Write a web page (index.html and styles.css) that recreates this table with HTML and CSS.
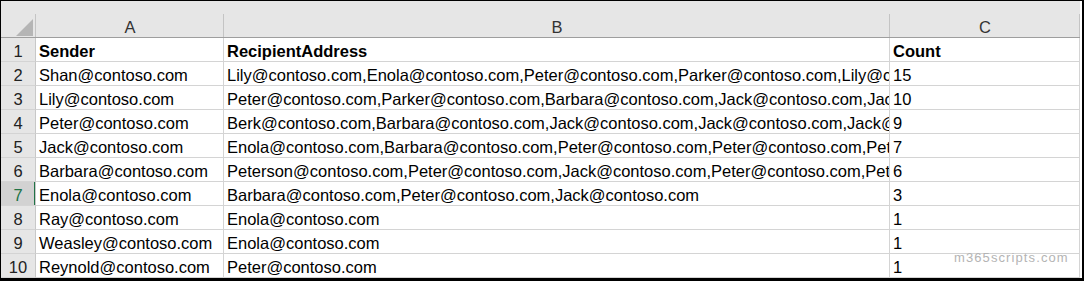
FILE: index.html
```html
<!DOCTYPE html>
<html lang="en">
<head>
<meta charset="utf-8">
<title>Sheet</title>
<link rel="stylesheet" href="styles.css">
</head>
<body>
<div class="sheet">
  <div class="grid">
    <div class="corner"><span class="tri"></span></div>
    <div class="colhead">A</div>
    <div class="colhead">B</div>
    <div class="colhead">C</div>

    <div class="rowhead">1</div>
    <div class="cell bold">Sender</div>
    <div class="cell bold">RecipientAddress</div>
    <div class="cell bold">Count</div>

    <div class="rowhead">2</div>
    <div class="cell">Shan@contoso.com</div>
    <div class="cell">Lily@contoso.com,Enola@contoso.com,Peter@contoso.com,Parker@contoso.com,Lily@contoso.com,Jack@contoso.com</div>
    <div class="cell">15</div>

    <div class="rowhead">3</div>
    <div class="cell">Lily@contoso.com</div>
    <div class="cell">Peter@contoso.com,Parker@contoso.com,Barbara@contoso.com,Jack@contoso.com,Jack@contoso.com</div>
    <div class="cell">10</div>

    <div class="rowhead">4</div>
    <div class="cell">Peter@contoso.com</div>
    <div class="cell">Berk@contoso.com,Barbara@contoso.com,Jack@contoso.com,Jack@contoso.com,Jack@contoso.com</div>
    <div class="cell">9</div>

    <div class="rowhead">5</div>
    <div class="cell">Jack@contoso.com</div>
    <div class="cell">Enola@contoso.com,Barbara@contoso.com,Peter@contoso.com,Peter@contoso.com,Peter@contoso.com</div>
    <div class="cell">7</div>

    <div class="rowhead">6</div>
    <div class="cell">Barbara@contoso.com</div>
    <div class="cell">Peterson@contoso.com,Peter@contoso.com,Jack@contoso.com,Peter@contoso.com,Peter@contoso.com</div>
    <div class="cell">6</div>

    <div class="rowhead selected">7</div>
    <div class="cell">Enola@contoso.com</div>
    <div class="cell">Barbara@contoso.com,Peter@contoso.com,Jack@contoso.com</div>
    <div class="cell">3</div>

    <div class="rowhead">8</div>
    <div class="cell">Ray@contoso.com</div>
    <div class="cell">Enola@contoso.com</div>
    <div class="cell">1</div>

    <div class="rowhead">9</div>
    <div class="cell">Weasley@contoso.com</div>
    <div class="cell">Enola@contoso.com</div>
    <div class="cell">1</div>

    <div class="rowhead">10</div>
    <div class="cell">Reynold@contoso.com</div>
    <div class="cell">Peter@contoso.com</div>
    <div class="cell">1</div>
  </div>
  <div class="watermark">m365scripts.com</div>
</div>
</body>
</html>
```

FILE: styles.css
```css
html, body {
  margin: 0;
  padding: 0;
  background: #ffffff;
}

.sheet {
  position: relative;
  width: 1084px;
  height: 281px;
  box-sizing: border-box;
  border-top: 1px solid #000;
  border-left: 1px solid #000;
  border-right: 2px solid #000;
  border-bottom: 3px solid #000;
  padding-right: 2px;
  background: #fff;
  font-family: "Liberation Sans", Arial, sans-serif;
  font-size: 16.5px;
  color: #000;
}

.grid {
  display: grid;
  grid-template-columns: 35px 188px 666px 190px;
  grid-template-rows: 37px repeat(10, 24px);
}

.grid > div {
  box-sizing: border-box;
  display: flex;
  align-items: flex-end;
  line-height: 1;
  padding-bottom: 2px;
  white-space: nowrap;
  overflow: hidden;
  min-width: 0;
}

.corner,
.colhead {
  position: relative;
  background: #e6e6e6;
  border-bottom: 1px solid #9e9e9e;
  color: #333;
}

.corner::after,
.colhead::after {
  content: "";
  position: absolute;
  right: 0;
  top: 13px;
  bottom: 0;
  width: 1px;
  background: #c4c4c4;
}

.colhead {
  justify-content: center;
  padding-bottom: 2px;
}

.tri {
  position: absolute;
  left: 15px;
  top: 18px;
  width: 17px;
  height: 17px;
  background: #b5b5b5;
  clip-path: polygon(100% 0, 100% 100%, 0 100%);
}

.rowhead {
  background: #e6e6e6;
  justify-content: center;
  border-right: 1px solid #c8c8c8;
  border-bottom: 1px solid #d4d4d4;
  color: #222;
  position: relative;
}

.rowhead.selected {
  background: #d2d2d2;
  color: #217346;
}

.rowhead.selected::after {
  content: "";
  position: absolute;
  right: -1px;
  top: 0;
  bottom: -1px;
  width: 2px;
  background: #217346;
}

.cell {
  border-right: 1px solid #d4d4d4;
  border-bottom: 1px solid #d4d4d4;
  padding-left: 3px;
}

.bold {
  font-weight: bold;
}

.watermark {
  position: absolute;
  left: 953px;
  top: 250px;
  font-family: "Liberation Sans", Arial, sans-serif;
  font-size: 13px;
  letter-spacing: 1.1px;
  line-height: 1;
  color: #b4b4b4;
}
```
